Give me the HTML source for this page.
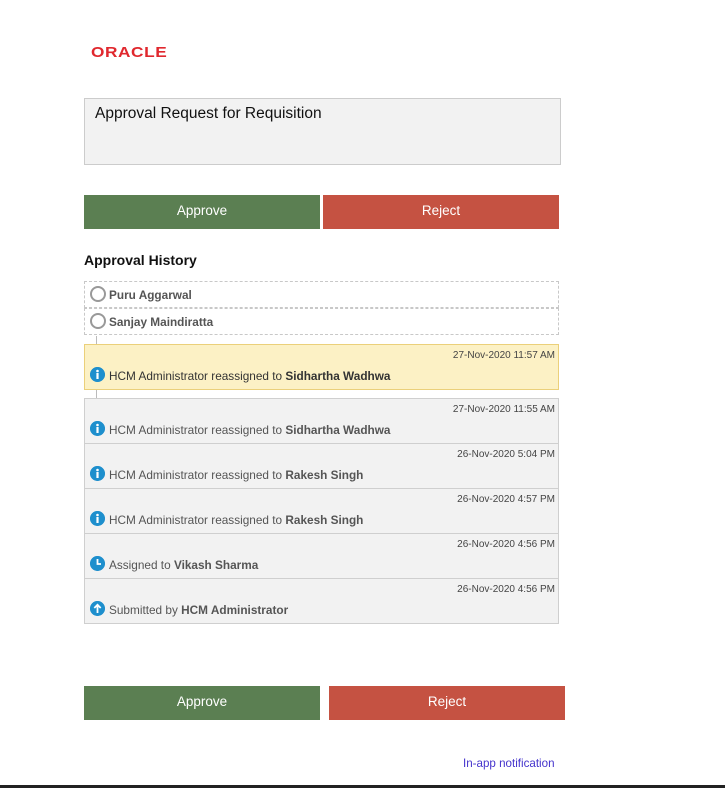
<!DOCTYPE html>
<html><head><style>
*{margin:0;padding:0;box-sizing:border-box}
body{width:725px;height:788px;background:#fff;position:relative;font-family:"Liberation Sans",Arial,sans-serif;overflow:hidden}
.a{position:absolute}
.logo{left:91px;top:44px;color:#e0282e;font-size:15px;font-weight:bold;letter-spacing:0.5px;transform:scaleX(1.15);transform-origin:left}
.box{left:84px;top:98px;width:477px;height:67px;background:#f2f2f2;border:1px solid #ccc;padding:6px 10px;font-size:15.5px;color:#111}
.btn{height:34px;color:#fff;font-size:13.5px;text-align:center;line-height:32px}
.g{background:#5b7f52}.r{background:#c55242}
.h{left:84px;top:252px;font-size:14px;font-weight:bold;color:#111}
.row{left:84px;width:475px;font-size:11.8px;color:#555}
.dash{border:1px dashed #c8c8c8;height:27px;padding-left:24px;line-height:26px;font-weight:bold}
.ring{position:absolute;left:5px;top:4px;width:16px;height:16px;border:2px solid #999;border-radius:50%}
.it{height:46px;border:1px solid #cfcfcf;background:#f2f2f2}
.y{background:#fcf1c5;border-color:#ebd07a}
.dt{position:absolute;right:3px;top:5px;font-size:10px;color:#444}
.tx{position:absolute;left:24px;top:24px}
.tx b{color:#555}.y .tx,.y .tx b{color:#333}
.ic{position:absolute;left:5px;top:22px;width:15px;height:15px;border-radius:50%;background:#1e8fcd}
.ln{left:96px;width:1px;background:#bbb}
</style></head><body>
<div class="a logo">ORACLE</div>
<div class="a box">Approval Request for Requisition</div>
<div class="a btn g" style="left:84px;top:195px;width:236px">Approve</div>
<div class="a btn r" style="left:323px;top:195px;width:236px">Reject</div>
<div class="a h">Approval History</div>
<div class="a row dash" style="top:281px"><span class="ring"></span>Puru Aggarwal</div>
<div class="a row dash" style="top:308px"><span class="ring"></span>Sanjay Maindiratta</div>
<div class="a ln" style="top:336px;height:8px"></div>
<div class="a row it y" style="top:344px"><span class="dt">27-Nov-2020 11:57 AM</span><svg class="ic" viewBox="0 0 15 15"><circle cx="7.5" cy="7.5" r="7.5" fill="#1e8fcd"/><circle cx="7.5" cy="4" r="1.3" fill="#fff"/><rect x="6.4" y="6" width="2.2" height="6" fill="#fff"/></svg><span class="tx">HCM Administrator reassigned to <b>Sidhartha Wadhwa</b></span></div>
<div class="a ln" style="top:390px;height:8px"></div>
<div class="a row it" style="top:398px"><span class="dt">27-Nov-2020 11:55 AM</span><svg class="ic" viewBox="0 0 15 15"><circle cx="7.5" cy="7.5" r="7.5" fill="#1e8fcd"/><circle cx="7.5" cy="4" r="1.3" fill="#fff"/><rect x="6.4" y="6" width="2.2" height="6" fill="#fff"/></svg><span class="tx">HCM Administrator reassigned to <b>Sidhartha Wadhwa</b></span></div>
<div class="a row it" style="top:443px"><span class="dt">26-Nov-2020 5:04 PM</span><svg class="ic" viewBox="0 0 15 15"><circle cx="7.5" cy="7.5" r="7.5" fill="#1e8fcd"/><circle cx="7.5" cy="4" r="1.3" fill="#fff"/><rect x="6.4" y="6" width="2.2" height="6" fill="#fff"/></svg><span class="tx">HCM Administrator reassigned to <b>Rakesh Singh</b></span></div>
<div class="a row it" style="top:488px"><span class="dt">26-Nov-2020 4:57 PM</span><svg class="ic" viewBox="0 0 15 15"><circle cx="7.5" cy="7.5" r="7.5" fill="#1e8fcd"/><circle cx="7.5" cy="4" r="1.3" fill="#fff"/><rect x="6.4" y="6" width="2.2" height="6" fill="#fff"/></svg><span class="tx">HCM Administrator reassigned to <b>Rakesh Singh</b></span></div>
<div class="a row it" style="top:533px"><span class="dt">26-Nov-2020 4:56 PM</span><svg class="ic" viewBox="0 0 15 15"><circle cx="7.5" cy="7.5" r="7.5" fill="#1e8fcd"/><path d="M7.5 3V8H11" stroke="#fff" stroke-width="1.8" fill="none"/></svg><span class="tx">Assigned to <b>Vikash Sharma</b></span></div>
<div class="a row it" style="top:578px"><span class="dt">26-Nov-2020 4:56 PM</span><svg class="ic" viewBox="0 0 15 15"><circle cx="7.5" cy="7.5" r="7.5" fill="#1e8fcd"/><path d="M7.5 12V4M4.3 7L7.5 3.8 10.7 7" stroke="#fff" stroke-width="1.8" fill="none"/></svg><span class="tx">Submitted by <b>HCM Administrator</b></span></div>
<div class="a btn g" style="left:84px;top:686px;width:236px">Approve</div>
<div class="a btn r" style="left:329px;top:686px;width:236px">Reject</div>
<div class="a" style="left:463px;top:757px;font-size:11.6px;color:#4433cc">In-app notification</div>
<div class="a" style="left:0;top:785px;width:725px;height:3px;background:#222"></div>
</body></html>
